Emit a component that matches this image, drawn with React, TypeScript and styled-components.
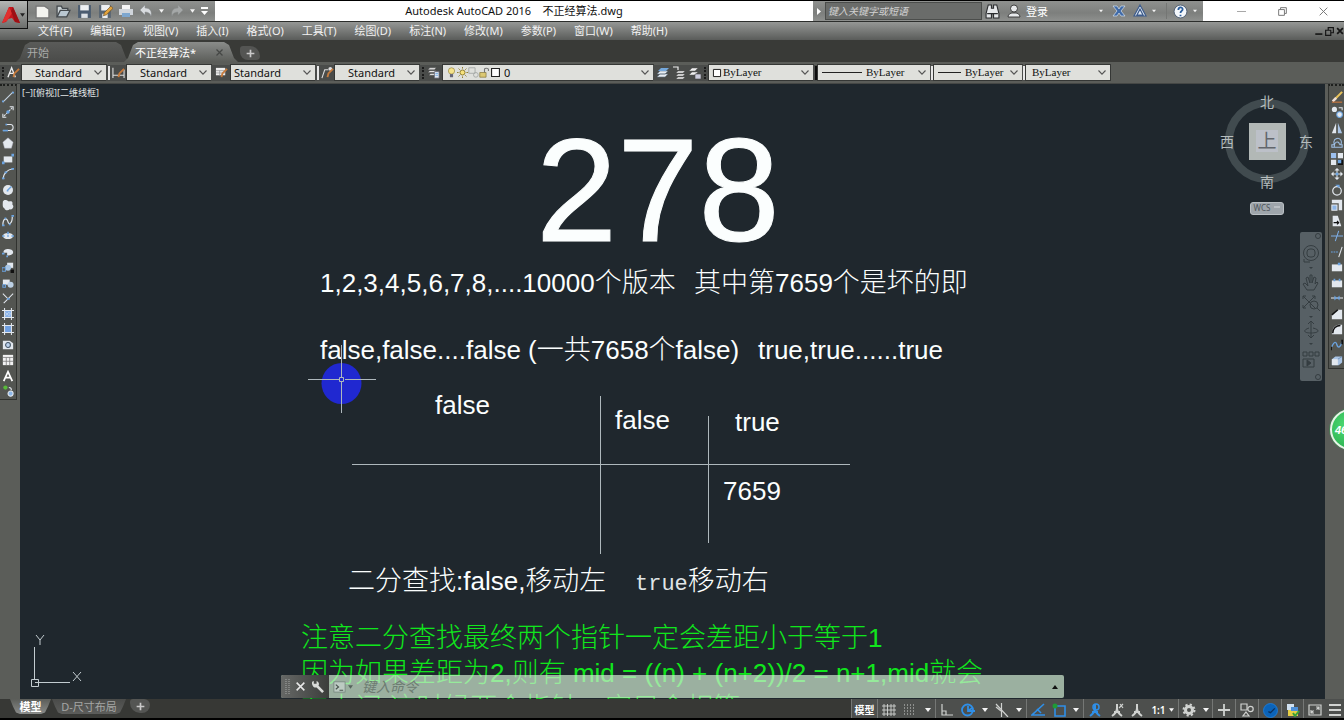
import React from "react";
import styled, { createGlobalStyle, css } from "styled-components";

const UI = `"Noto Sans", "Noto Sans CJK SC", sans-serif`;
const DRAW = `"Liberation Sans", "Noto Sans CJK SC", sans-serif`;

const Global = createGlobalStyle`
  * { box-sizing: border-box; }
  html, body { margin: 0; height: 100%; background: #000; }
  body { font-family: ${UI}; font-size: 11px; overflow: hidden; }
  button { border: 0; padding: 0; margin: 0; background: none; color: inherit; font: inherit; cursor: pointer; }
  svg { display: block; flex: none; }
`;

const Shell = styled.div`
  display: grid;
  grid-template-rows: auto auto auto auto minmax(0, 1fr) auto;
  height: 100vh;
  padding: 1px 0 2px;
  background: #000;
  overflow: hidden;
  position: relative;
`;

/* ---------- title bar ---------- */
const TitleBar = styled.header`
  display: flex;
  height: 20px;
  background: #fff;
`;
const LogoButton = styled.button`
  position: absolute;
  left: 0;
  top: 1px;
  width: 28px;
  height: 28px;
  z-index: 2;
  display: flex;
  align-items: center;
  padding-left: 2px;
  background: linear-gradient(#b4b6b4, #6c6e6c);
  border-right: 1px solid #111;
  border-bottom: 1px solid #111;
`;
const QuickAccess = styled.div`
  display: flex;
  align-items: center;
  gap: 6px;
  width: 215px;
  padding-left: 35px;
  background: linear-gradient(#8f918f, #7d7f7d 60%, #8e908e);
`;
const Title = styled.h1`
  flex: 1;
  margin: 0;
  text-align: center;
  font-size: 11px;
  font-weight: 400;
  line-height: 20px;
  color: #111;
  white-space: pre;
`;
const InfoCenter = styled.div`
  display: flex;
  align-items: center;
  width: 390px;
  background: linear-gradient(#8f918f, #7d7f7d 60%, #8e908e);
  color: #fff;
`;
const SearchToggle = styled.button`
  width: 12px;
  height: 20px;
  display: flex;
  align-items: center;
  justify-content: center;
`;
const SearchInput = styled.input`
  width: 157px;
  height: 18px;
  padding: 0 2px;
  border: 1px solid #4b4d4b;
  background: #6a6c6a;
  color: #eee;
  font: italic 10px ${UI};
  &::placeholder { color: #d2d2d2; opacity: 1; }
`;
const InfoButton = styled.button<{ $w: number }>`
  width: ${(p) => p.$w}px;
  height: 20px;
  display: flex;
  align-items: center;
  justify-content: center;
  gap: 5px;
`;
const Login = styled(InfoButton)`
  justify-content: flex-start;
  padding-left: 4px;
`;
const HelpButton = styled(InfoButton)`
  height: 16px;
  margin-left: auto;
  border-left: 1px solid #747674;
`;
const WindowButtons = styled.div`
  display: flex;
  width: 141px;
  padding-left: 18px;
  color: #777;
`;
const WindowButton = styled.button`
  flex: 1;
  display: flex;
  align-items: center;
  justify-content: center;
`;

/* ---------- menu ---------- */
const MenuBar = styled.nav`
  display: flex;
  align-items: center;
  gap: 18px;
  height: 19px;
  padding-left: 38px;
  border-top: 1px solid #2c2e2c;
  background: linear-gradient(#959795, #5a5c5a);
`;
const MenuItem = styled.button`
  text-align: left;
  color: #f2f2f2;
  line-height: 16px;
  white-space: nowrap;
`;
const ChildButtons = styled.div`
  display: flex;
  gap: 2px;
  margin-left: auto;
  color: #151515;
`;

/* ---------- file tabs ---------- */
const FileTabs = styled.div`
  display: flex;
  align-items: flex-end;
  height: 22px;
  padding-left: 16px;
  background: #393a37;
`;
const FileTab = styled.button<{ $active?: boolean }>`
  position: relative;
  display: flex;
  align-items: center;
  justify-content: space-between;
  width: 114px;
  height: 20px;
  margin-right: -6px;
  padding: 0 15px 0 11px;
  border-radius: 8px 8px 0 0;
  color: ${(p) => (p.$active ? "#fff" : "#a9aaa8")};
  background: ${(p) => (p.$active ? "linear-gradient(#8a8c8a, #5b5d59)" : "linear-gradient(#5a5b59, #4a4b49)")};
  clip-path: polygon(0 100%, 4px 80%, 9px 15%, 14px 0, calc(100% - 14px) 0, calc(100% - 9px) 15%, calc(100% - 4px) 80%, 100% 100%);
  z-index: ${(p) => (p.$active ? 1 : 0)};
`;
const AddTab = styled.button<{ $flip?: boolean }>`
  display: flex;
  align-items: center;
  justify-content: center;
  width: 20px;
  height: 14px;
  margin: 0 0 2px ${(p) => (p.$flip ? 3 : 8)}px;
  color: #c9c9c9;
  background: #545553;
  border-radius: ${(p) => (p.$flip ? "3px 6px 8px 10px" : "3px 10px 4px 8px")};
`;

/* ---------- property toolbar ---------- */
const ToolRow = styled.div`
  display: flex;
  align-items: center;
  height: 22px;
  border-bottom: 1px solid #454745;
  background: #5b5d59;
`;
const ToolSlot = styled.div<{ $w: number }>`
  display: flex;
  align-items: center;
  justify-content: center;
  gap: 2px;
  width: ${(p) => p.$w}px;
  height: 16px;
  background: #4a4c4a;
`;
const ToolGap = styled.i`
  width: 3px;
`;
const Divider = styled.i<{ $dark?: boolean }>`
  width: 2px;
  height: 14px;
  background: ${(p) => (p.$dark ? "#0c0c0c" : "#e8e8e8")};
`;
const Grip = styled.i`
  width: 3px;
  height: 12px;
  border-left: 2px dotted #1b1b1b;
`;
const Combo = styled.label<{ $w: number }>`
  display: flex;
  align-items: center;
  width: ${(p) => p.$w}px;
  height: 15px;
  padding-right: 4px;
  background: #dfe0dc;
  color: #555;
  outline: 1px solid #353735;
`;
const Select = styled.select<{ $indent?: number; $serif?: boolean }>`
  flex: 1;
  min-width: 0;
  height: 15px;
  appearance: none;
  border: 0;
  padding: 0 0 0 ${(p) => p.$indent ?? 2}px;
  background: transparent;
  color: #111;
  font: 11px ${(p) => (p.$serif ? `"Liberation Serif", serif` : UI)};
  line-height: 15px;
`;
const LineSample = styled.i<{ $w: number }>`
  width: ${(p) => p.$w}px;
  height: 1px;
  margin-left: 4px;
  background: #222;
`;

/* ---------- work area ---------- */
const Work = styled.main`
  display: flex;
  min-height: 0;
  background: #5b5d59;
`;
const Palette = styled.div<{ $count: number; $side: "left" | "right" }>`
  display: flex;
  flex-direction: column;
  align-items: center;
  height: ${(p) => p.$count * 15 + p.$count / 2 + 6}px;
  flex: none;
  padding-top: 3px;
  background: #535551;
  border: solid #30322f;
  border-width: 0 1px 1px;
  border-top: 2px dotted #1d1f1d;
  ${(p) =>
    p.$side === "left"
      ? css`width: 17px; margin-right: 3px; border-left: 0;`
      : css`width: 16px; margin-left: 3px; border-right: 0;`}
`;
const PaletteButton = styled.button`
  flex: 1;
  width: 15px;
  display: flex;
  align-items: center;
  justify-content: center;
`;
const Canvas = styled.section`
  position: relative;
  flex: 1;
  min-width: 0;
  overflow: hidden;
  background: #1f272d;
`;
const ViewLabel = styled.button`
  position: absolute;
  left: 2px;
  top: 2px;
  font-size: 9px;
  line-height: 14px;
  color: #e2e6e6;
`;
const Note = styled.div<{ $x: number; $y: number; $green?: boolean }>`
  position: absolute;
  left: ${(p) => p.$x}px;
  top: ${(p) => p.$y}px;
  font-family: ${DRAW};
  font-size: 26px;
  line-height: 32px;
  white-space: pre;
  color: ${(p) => (p.$green ? "#10e61c" : "#fbfefe")};
`;
const Headline = styled(Note)`
  font-size: 146px;
  line-height: 146px;
  -webkit-text-stroke: 1px #fbfefe;
`;
const Han = styled.span`
  font-family: "Noto Sans CJK SC", sans-serif;
  font-size: 27px;
  line-height: 0;
  font-weight: 300;
`;
const Mono = styled.span`
  font-family: "Liberation Mono", monospace;
  font-size: 22px;
  line-height: 0;
  color: #dfe4e6;
`;
const Geometry = styled.svg`
  position: absolute;
  left: 0;
  top: 0;
`;
const ViewCube = styled.svg`
  position: absolute;
  right: 9px;
  top: 8px;
`;
const Ucs = styled.svg`
  position: absolute;
  left: 8px;
  bottom: 6px;
`;
const NavBar = styled.div`
  position: absolute;
  right: 3px;
  top: 148px;
  width: 22px;
  height: 149px;
  border-radius: 2px;
  background: #576065;
  color: #353d41;
`;
const CommandBar = styled.form`
  position: absolute;
  left: 20%;
  right: 20%;
  bottom: 1px;
  height: 23px;
  display: flex;
  border-radius: 2px;
  overflow: hidden;
  background: rgba(208, 235, 210, 0.7);
`;
const CommandHandle = styled.div`
  display: flex;
  align-items: center;
  gap: 6px;
  width: 48px;
  padding-left: 4px;
  color: #e8e8e8;
  background: linear-gradient(90deg, #666866, #3b3d3b);
`;
const CommandPrompt = styled.span`
  display: flex;
  align-items: center;
  gap: 2px;
  width: 31px;
  padding-left: 4px;
  color: #56635c;
`;
const CommandInput = styled.input`
  flex: 1;
  min-width: 0;
  border: 0;
  padding: 0 2px;
  background: transparent;
  font: italic 14px ${UI};
  color: #26302a;
  &::placeholder { color: #6d7d72; opacity: 1; }
`;
const HistoryButton = styled.button`
  width: 18px;
  display: flex;
  align-items: center;
  justify-content: center;
`;
const Bubble = styled.button`
  position: absolute;
  right: -27px;
  top: 409px;
  width: 41px;
  height: 41px;
  border: 2px solid #e7f5e8;
  border-radius: 50%;
  background: radial-gradient(circle at 40% 40%, #4fdb74, #22a647);
  box-shadow: 0 0 0 1px #4b7a55;
  color: #fff;
  font: italic bold 11px "Liberation Sans", sans-serif;
  text-align: left;
  padding-left: 3px;
`;

/* ---------- bottom bar ---------- */
const BottomBar = styled.footer`
  display: flex;
  align-items: flex-start;
  height: 19px;
  padding-left: 10px;
  background: #373835;
`;
const LayoutTab = styled.button<{ $active?: boolean; $w: number }>`
  width: ${(p) => p.$w}px;
  height: 15px;
  margin-right: 1px;
  line-height: 15px;
  color: ${(p) => (p.$active ? "#fff" : "#a5a6a4")};
  font-weight: ${(p) => (p.$active ? 700 : 400)};
  background: ${(p) => (p.$active ? "linear-gradient(#5b5d59, #8a8c8a)" : "linear-gradient(#4a4b49, #5c5d5b)")};
  clip-path: polygon(0 0, 100% 0, calc(100% - 3px) 50%, calc(100% - 6px) 90%, calc(100% - 10px) 100%, 10px 100%, 6px 90%, 3px 50%);
`;
const StatusBar = styled.div`
  display: flex;
  margin-left: auto;
  background: #4d4f4d;
  color: #d0d2d0;
`;
const StatusButton = styled.button<{ $w: number; $sep?: boolean; $on?: boolean }>`
  width: ${(p) => p.$w}px;
  height: 19px;
  display: flex;
  align-items: center;
  justify-content: center;
  gap: 3px;
  padding-top: 3px;
  color: ${(p) => (p.$on ? "#2f8fe8" : "inherit")};
  border-left: 1px solid ${(p) => (p.$sep ? "#757775" : "transparent")};
  white-space: nowrap;
`;
const StatusText = styled.span`
  color: #fff;
  font-size: 10px;
  line-height: 14px;
  font-weight: 600;
`;

/* ---------- icons ---------- */
type IconProps = { s?: number; sw?: number; children: React.ReactNode };
const Icon = ({ s = 14, sw = 1.2, children }: IconProps) => (
  <svg width={s} height={s} viewBox="0 0 14 14" fill="none" stroke="currentColor" strokeWidth={sw} aria-hidden="true">
    {children}
  </svg>
);
const Caret = ({ w = 6, color = "#f4f4f4" }: { w?: number; color?: string }) => (
  <svg width={w} height={4} viewBox="0 0 6 4" aria-hidden="true">
    <path d="M0 0h6L3 4z" fill={color} />
  </svg>
);
const Chevron = () => (
  <svg width="8" height="5" viewBox="0 0 8 5" fill="none" stroke="#555" strokeWidth="1.1" aria-hidden="true">
    <path d="M.5 .5 4 4.2 7.5 .5" />
  </svg>
);
const Plus = () => (
  <Icon s={9} sw={2.6}>
    <path d="M7 1v12M1 7h12" />
  </Icon>
);

const B = "#6ba3e0";
const W = "#e3e8ee";

const newIcon = <path d="M1 2h8l4 3v8H1z" fill="#f3f3ef" stroke="#777" />;
const openIcon = <g stroke="#43484c"><path d="M1 12V2h4l1 2h5v2" fill="#cdd5d8" /><path d="M1 12 4 6h9l-3 6z" fill="#b9c7d1" /></g>;
const saveIcon = <g stroke="none"><path d="M1 1h12v12H1z" fill="#4b5c70" /><path d="M3 1h8v5H3z" fill="#eef0f2" /><path d="M4 9h6v4H4z" fill="#dde1e6" /></g>;
const saveAsIcon = <g stroke="none"><path d="M1 1h11v12H1z" fill="#586573" /><path d="M3 1h8v5H3zM4 9h5v4H4z" fill="#eef0f2" /><path d="m5 11 1-3 6-6 2 2-6 6z" fill="#e2a33d" stroke="#6b4b1d" strokeWidth=".6" /></g>;
const printIcon = <g stroke="none"><path d="M3 1h8v4H3z" fill="#f6f6f6" /><path d="M0 5h14v6H0z" fill="#d0d5db" /><path d="M3 9h8v4H3z" fill="#7ea7cf" /></g>;
const undoIcon = <path d="M1 6 6 1v3c5 0 7 3 6 8-1-3-3-4-6-4v3z" fill="#d9dcdf" stroke="#8b8f92" strokeWidth=".5" />;
const redoIcon = <path d="M13 6 8 1v3C3 4 1 7 2 12c1-3 3-4 6-4v3z" fill="#a5a8a8" stroke="#8b8f8f" strokeWidth=".5" />;
const brush = <path d="m7 12 1-4 5-5" stroke="#c67a3c" strokeWidth="2" />;

const textStyleIcon = <><path d="M1 12 5 2l4 10M2.5 8h5" stroke="#eee" strokeWidth="1.4" />{brush}</>;
const dimStyleIcon = <><path d="M1 2v11M13 4v9M1 10h12" stroke="#ddd" />{brush}</>;
const tableStyleIcon = <><path d="M1 2h10v8H1z" fill="#eee" stroke="none" /><path d="M1 5h10M1 7.5h10M5 5v5" stroke="#888" strokeWidth=".7" />{brush}</>;
const leaderStyleIcon = <><path d="M1 13 4 4h4" stroke="#ddd" /><circle cx="10" cy="3" r="2" fill="#ddd" stroke="none" />{brush}</>;
const layersIcon = <><path d="m1 4 2-2h7L8 4zM1 7l2-2h7L8 7zM2 10l2-2h6l-2 2z" fill="#f0f0f0" stroke="#444" strokeWidth=".5" /><path d="M8 6h5v7H8z" fill="#dfe8f2" stroke="#667" strokeWidth=".8" /><path d="M9 8h3M9 10h3" stroke={B} strokeWidth=".9" /></>;
const layerAIcon = <><path d="m1 11 3-3h8l-3 3zM1 8l3-3h8L9 8z" fill="#e9eef3" stroke="#60707f" strokeWidth=".6" /><path d="m2 5 3-3h8l-3 3z" fill="#75a8dc" stroke="none" /></>;
const layerBIcon = <><path d="m4 7 2-2h7l-2 2zM4 10l2-2h7l-2 2zM4 13l2-2h7l-2 2z" fill="#f0f0f0" stroke="#555" strokeWidth=".5" /><path d="M1 1h5v3" stroke="#eee" /></>;
const layerCIcon = <><path d="m1 5 3-3h6L7 5zM1 9l3-3h6L7 9z" fill="#f0f0f0" stroke="#555" strokeWidth=".5" /><path d="M7 8h6v5H7z" fill="#ccd" stroke="#444" strokeWidth=".6" /></>;
const bulbIcon = <><circle cx="7" cy="5" r="4" fill="#f4e28a" stroke="#8d7c3a" strokeWidth=".8" /><path d="M5 9h4v4H5z" fill="#667" stroke="none" /></>;
const sunIcon = <><circle cx="7" cy="7" r="3.2" fill="#f7e27c" stroke="#8c7a2e" /><path d="M7 0v2M7 12v2M0 7h2M12 7h2M2 2l1.5 1.5M10.5 10.5 12 12M2 12l1.5-1.5M10.5 3.5 12 2" stroke="#8c7a2e" /></>;
const vpIcon = <><path d="M1 1h8v7H1z" stroke="#a7aaa8" /><circle cx="10" cy="10" r="3" stroke="#a7aaa8" /></>;
const lockIcon = <><path d="M1 7h8v6H1z" fill="#dcc873" stroke="#7c6b2b" strokeWidth=".8" /><path d="M7 7V3c0-2 5-2 5 0v2" stroke="#777" strokeWidth="1.4" /></>;
const squareIcon = <path d="M2 2h10v10H2z" fill="#fff" stroke="#222" strokeWidth="1.4" />;

const drawTools: [string, React.ReactNode][] = [
  ["直线", <><path d="M1 13 13 1" stroke="#c9d6e4" /><path d="M0 12h2M12 2h2" stroke={B} strokeWidth="2" /></>],
  ["构造线", <><path d="M2 12 12 2" stroke={W} strokeDasharray="3 1" /><path d="M9 1h4v4M1 9v4h4" stroke={W} /><circle cx="7" cy="7" r="2" fill={B} stroke="none" /></>],
  ["多段线", <><path d="M5 3h5c4 0 4 7 0 7H1" stroke={W} /><path d="M1 10h6" stroke={B} strokeWidth="2" /><path d="M4 3h2" stroke={B} strokeWidth="2" /></>],
  ["多边形", <path d="m7 1 6 5-2 7H3L1 6z" fill={W} stroke="#aab" strokeWidth=".5" />],
  ["矩形", <><path d="M2 4h10v7H2z" fill={W} stroke="none" /><path d="M11 1h3v3h-3zM0 10h3v3H0z" fill={B} stroke="none" /></>],
  ["圆弧", <><path d="M1 13C2 6 6 2 13 1" stroke={W} /><path d="M0 12h3M3 5h3M11 1h3" stroke={B} strokeWidth="2" /></>],
  ["圆", <><circle cx="7" cy="7" r="5.8" fill={W} stroke="none" /><path d="m6 8 5-5M5.5 8h2" stroke={B} strokeWidth="1.6" /></>],
  ["修订云线", <path d="M1 3c1-3 5-2 7 0 3-1 5 0 4 3 3 3 0 7-3 6-2 2-6 1-6-1-3-1-2-5-2-8z" fill={W} stroke="none" />],
  ["样条曲线", <><path d="M1 12c0-9 5-9 6-4 1 4 5 2 5-6" stroke={W} strokeWidth="1.4" /><path d="M0 12h3M3 4h2M8 11h2M11 1h3" stroke={B} strokeWidth="2" /></>],
  ["椭圆", <><ellipse cx="7" cy="7" rx="6" ry="3.6" fill={W} stroke="none" /><path d="M0 7h3M11 7h3M7 2v3M6 7h2" stroke={B} strokeWidth="2" /></>],
  ["椭圆弧", <><path d="M2 8c-2-6 11-6 11-1 0 4-5 4-7 4V8z" fill={W} stroke="none" /><path d="M0 9h3M5 12h2" stroke={B} strokeWidth="2" /></>],
  ["插入块", <><path d="M6 2h7v6H6z" fill={W} stroke="none" /><circle cx="7" cy="8" r="3.5" fill="#a9c6e4" stroke="none" /><path d="M0 8h4v4H0z" stroke={B} /><path d="M10 10h4v4h-4z" fill="#111" stroke="none" /></>],
  ["创建块", <><path d="M1 3h8v6H1z" fill={W} stroke="none" /><circle cx="10" cy="9" r="3.5" fill="#bcd0e4" stroke="none" /><path d="M1 9h3v3H1z" stroke={B} /></>],
  ["点", <><path d="m1 2 6 6 6-6M7 8l-5 5" stroke={W} /><path d="M6 8h3" stroke={B} strokeWidth="2" /></>],
  ["图案填充", <><path d="M3 3h8v8H3z" fill="#86b1e8" stroke="none" /><path d="M3 0v14M11 0v14M0 3h14M0 11h14" stroke={W} /><path d="m4 5 2 2 2-2 2 2M4 9l2-2 2 2 2-2" stroke={W} strokeWidth=".7" /></>],
  ["渐变色", <><path d="M3 3h8v8H3z" fill="#6f9fe0" stroke="none" /><path d="M3 0v14M11 0v14M0 3h14M0 11h14" stroke={W} /></>],
  ["面域", <><path d="M1 2h8l4 3v7H1z" fill={W} stroke="none" /><circle cx="7" cy="7" r="2.8" fill="#bdd3ee" stroke="#456" /></>],
  ["表格", <><path d="M1 1h12v12H1z" fill="#f2f2f2" stroke="none" /><path d="M1 4h12M1 8.5h12M5 4v9M9 4v9" stroke="#777" strokeWidth=".9" /></>],
  ["多行文字", <path d="M2 13 7 2l5 11M4 9h6" stroke="#fff" strokeWidth="2" />],
  ["添加选定对象", <><circle cx="4" cy="3" r="2.5" fill="#58b83a" stroke="none" /><circle cx="10" cy="10" r="3" fill="#8db8ea" stroke={W} /><path d="M8 3c3 0 3 2 3 3" stroke={W} /></>],
];

const modifyTools: [string, React.ReactNode][] = [
  ["删除", <><path d="m5 9 8-8" stroke="#e9c35a" strokeWidth="2.4" /><path d="m2 12 4-4" stroke="#f0e0d8" strokeWidth="3" /><path d="M1 13h12" stroke="#d87b3a" /></>],
  ["复制", <><circle cx="4" cy="4" r="3" fill={W} stroke="none" /><circle cx="10" cy="10" r="3.3" fill={W} stroke={B} /><path d="M9 2h4v3" stroke={W} /></>],
  ["镜像", <><path d="M6 1v12H1z" fill={W} stroke="none" /><path d="M8 1v12h5z" fill="#a9c3e3" stroke="none" /></>],
  ["偏移", <path d="M1 12h12V9h-2c3-4-1-9-5-7-3 1-3 5-2 7H1zM4 12c-1-6 5-9 6-3" stroke="#9fc0e6" />],
  ["阵列", <><path d="M0 0h6v6H0z" fill="#9cc0ee" stroke="none" /><path d="M8 0h6v6H8zM0 8h6v6H0z" fill={W} stroke="none" /><path d="M8 8h6v6H8z" fill="#111" stroke="none" /><path d="M8 8h4v4H8z" fill={B} stroke="none" /></>],
  ["移动", <><path d="M7 2v10M2 7h10" stroke={W} /><path d="m7 0 3 3H4zM7 14l3-3H4zM0 7l3-3v6zM14 7l-3-3v6z" fill={W} stroke="none" /><path d="M5.5 5.5h3v3h-3z" fill={B} stroke="none" /></>],
  ["旋转", <><circle cx="7" cy="8" r="5" stroke={W} strokeWidth="1.4" /><path d="M5 1h5v4z" fill={B} stroke="none" /></>],
  ["缩放", <><path d="M1 1h12v12H9V5H1z" fill={W} stroke="none" /><path d="M1 7h6v6H1z" fill="#8db5e6" stroke={W} /></>],
  ["拉伸", <><path d="M2 1h6l4 12H2z" fill={W} stroke="none" /><path d="M3 9h6M7 7l2 2-2 2" stroke="#111" strokeWidth="1.4" /></>],
  ["修剪", <path d="M0 7h14M5 13 9 1" stroke="#7eaee6" />],
  ["延伸", <><path d="M0 7h8" stroke={B} strokeDasharray="2 1" /><path d="m9 13 4-12" stroke={W} /></>],
  ["打断于点", <><path d="M1 4h12v8H1z" fill={W} stroke="none" /><path d="M8 2h3v3H8z" fill={B} stroke="none" /></>],
  ["打断", <><path d="M1 4h12v8H1z" fill={W} stroke="none" /><path d="M3 2h2v3H3zM9 2h2v3H9z" fill={B} stroke="none" /></>],
  ["合并", <><path d="M0 7h14" stroke={W} /><path d="m4 4 3 3-3 3zM10 4 7 7l3 3z" fill={B} stroke="none" /></>],
  ["倒角", <><path d="M1 13V8l7-6h5v11z" fill={W} stroke="none" /><path d="m1 8 7-6" stroke="#111" strokeWidth="1.8" /></>],
  ["圆角", <><path d="M1 13c0-7 4-11 8-11h4v11z" fill={W} stroke="none" /><path d="M2 12C2 6 6 3 11 3" stroke="#111" strokeWidth="1.8" /></>],
  ["光顺曲线", <><path d="M1 9c3-7 5-6 6-2s4 3 6-4" stroke={B} strokeWidth="1.6" /><path d="M0 9v4M13 1v5" stroke="#111" strokeWidth="2" /></>],
  ["分解", <><path d="m1 6 4-3h8v7l-4 3H1z" fill="#a9c3e3" stroke="none" /><path d="M1 6h7v7H1z" fill={W} stroke="none" /><path d="m8 6 5-3" stroke="#5d7fa6" strokeWidth=".8" /></>],
];

const hanPattern = /([\u4e00-\u9fff]+)/;
const mixed = (text: string) =>
  text.split(hanPattern).map((part, i) => (hanPattern.test(part) ? <Han key={i}>{part}</Han> : part));

const menus = ["文件(F)", "编辑(E)", "视图(V)", "插入(I)", "格式(O)", "工具(T)", "绘图(D)", "标注(N)", "修改(M)", "参数(P)", "窗口(W)", "帮助(H)"];

type StyleComboProps = { label: string; w: number; indent?: number; serif?: boolean; value: string; lead?: React.ReactNode };
const StyleCombo = ({ label, w, indent, serif, value, lead }: StyleComboProps) => (
  <Combo $w={w}>
    {lead}
    <Select aria-label={label} $indent={indent} $serif={serif} defaultValue={value}>
      <option>{value}</option>
    </Select>
    <Chevron />
  </Combo>
);

const scaleFigure = <path d="M7 1v5M7 5c0 4-2 6-5 8M7 5c0 4 2 6 5 8M4 9h6" strokeWidth="2" />;

export default function App() {
  return (
    <Shell>
      <Global />
      <TitleBar>
        <LogoButton aria-label="应用程序菜单">
          <svg width="18" height="20" viewBox="0 0 18 20" aria-hidden="true">
            <path d="M0 18 7 2h4l7 16-5-1-3-4-4 1-2 3z" fill="#c4161c" />
            <path d="M7 2 0 18l5-2 5-8z" fill="#e0302f" />
            <path d="m9 6 4 11 5 1-7-16z" fill="#9d1015" />
          </svg>
          <Caret w={5} color="#222" />
        </LogoButton>
        <QuickAccess>
          <Icon s={15}>{newIcon}</Icon>
          <Icon s={15}>{openIcon}</Icon>
          <Icon s={15}>{saveIcon}</Icon>
          <Icon s={15}>{saveAsIcon}</Icon>
          <Icon s={14}>{printIcon}</Icon>
          <Icon>{undoIcon}</Icon>
          <Caret w={5} />
          <Icon>{redoIcon}</Icon>
          <Caret w={5} />
          <svg width="7" height="8" viewBox="0 0 7 8" aria-hidden="true"><path d="M0 0h7v2H0zM0 4h7L3.5 8z" fill="#fff" /></svg>
        </QuickAccess>
        <Title>{"Autodesk AutoCAD 2016    不正经算法.dwg"}</Title>
        <InfoCenter>
          <SearchToggle aria-label="展开搜索"><svg width="4" height="7" viewBox="0 0 4 7"><path d="M0 0v7l4-3.5z" fill="#fff" /></svg></SearchToggle>
          <SearchInput aria-label="搜索" placeholder="键入关键字或短语" />
          <InfoButton $w={21} aria-label="查找"><Icon s={15}><path d="M3 1h3v3h2V1h3l2 8v4H8V9H6v4H1V9z" fill="#e6e8ea" stroke="#2b2d2f" strokeWidth="1" /><path d="M2 9h4M8 9h4" stroke="#2b2d2f" /></Icon></InfoButton>
          <Login $w={91}><Icon><circle cx="7" cy="4.5" r="3.5" fill="#e8eaec" stroke="#333" strokeWidth=".9" /><path d="M1 13c0-3 3-4 4-4h4c1 0 4 1 4 4z" fill="#e8eaec" stroke="#333" strokeWidth=".9" /></Icon>登录</Login>
          <InfoButton $w={14} aria-label="登录选项"><Caret w={4} /></InfoButton>
          <InfoButton $w={22} aria-label="Exchange"><Icon><path d="M1 2h4l2 3 2-3h4l-4 5 4 5H9L7 9l-2 3H1l4-5z" fill="#3f6aa8" stroke="#d5e2f2" strokeWidth=".7" /></Icon></InfoButton>
          <InfoButton $w={28} aria-label="A360"><Icon><path d="M7 1 13 12H1zM7 5l3 6H4z" fill="#dfe8f3" stroke="#3e5c8c" /></Icon><Caret w={4} /></InfoButton>
          <HelpButton $w={37} aria-label="帮助"><Icon s={15}><circle cx="7" cy="7" r="6" fill="#f4f7fb" stroke="#44546a" strokeWidth=".8" /><path d="M5 5.5c0-3 4-3 4-.5C9 6.5 7 6.5 7 8.5M7 10v1.5" stroke="#2d5f9e" strokeWidth="1.7" /></Icon><Caret w={4} /></HelpButton>
        </InfoCenter>
        <WindowButtons>
          <WindowButton aria-label="最小化"><Icon s={9} sw={1}><path d="M0 7h14" /></Icon></WindowButton>
          <WindowButton aria-label="还原"><Icon s={9} sw={1.5}><path d="M1 4h9v9H1zM4 4V1h9v9h-3" /></Icon></WindowButton>
          <WindowButton aria-label="关闭"><Icon s={9} sw={1.5}><path d="m1 1 12 12M13 1 1 13" /></Icon></WindowButton>
        </WindowButtons>
      </TitleBar>

      <MenuBar>
        {menus.map((m) => <MenuItem key={m}>{m}</MenuItem>)}
        <ChildButtons>
          <button aria-label="最小化图形"><Icon s={9} sw={2.5}><path d="M2 11h11" /></Icon></button>
          <button aria-label="还原图形"><Icon s={9} sw={1.8}><path d="M1 5h8v8H1zM5 5V1h8v8H9" /></Icon></button>
          <button aria-label="关闭图形"><Icon s={8} sw={3}><path d="m2 2 10 10M12 2 2 12" /></Icon></button>
        </ChildButtons>
      </MenuBar>

      <FileTabs>
        <FileTab>开始</FileTab>
        <FileTab $active>不正经算法*<Icon s={7} sw={2.5}><path d="m1 1 12 12M13 1 1 13" stroke="#454745" /></Icon></FileTab>
        <AddTab aria-label="新图形"><Plus /></AddTab>
      </FileTabs>

      <ToolRow>
        <ToolSlot $w={22}><Grip /><Icon s={13}>{textStyleIcon}</Icon></ToolSlot>
        <StyleCombo label="文字样式" w={84} indent={13} value="Standard" />
        <ToolSlot $w={21}><Divider /><Icon s={13}>{dimStyleIcon}</Icon></ToolSlot>
        <StyleCombo label="标注样式" w={84} indent={13} value="Standard" />
        <ToolSlot $w={20}><Icon s={13}>{tableStyleIcon}</Icon></ToolSlot>
        <StyleCombo label="表格样式" w={84} indent={3} value="Standard" />
        <ToolSlot $w={20}><Divider /><Icon s={13}>{leaderStyleIcon}</Icon></ToolSlot>
        <StyleCombo label="多重引线样式" w={84} indent={13} value="Standard" />
        <ToolSlot $w={24}><Grip /><Icon s={13}>{layersIcon}</Icon></ToolSlot>
        <StyleCombo
          label="图层" w={210} indent={3} value="0"
          lead={<><ToolGap /><Icon s={11}>{bulbIcon}</Icon><Icon s={11}>{sunIcon}</Icon><Icon s={11}>{vpIcon}</Icon><Icon s={11}>{lockIcon}</Icon><Icon s={11}>{squareIcon}</Icon></>}
        />
        <ToolSlot $w={56}><Icon>{layerAIcon}</Icon><Icon>{layerBIcon}</Icon><Icon>{layerCIcon}</Icon><Grip /></ToolSlot>
        <StyleCombo label="颜色" w={104} indent={1} serif value="ByLayer" lead={<><ToolGap /><Icon s={10}>{squareIcon}</Icon></>} />
        <ToolSlot $w={5}><Divider $dark /></ToolSlot>
        <StyleCombo label="线型" w={112} indent={4} serif value="ByLayer" lead={<LineSample $w={40} />} />
        <ToolSlot $w={4}><Divider /></ToolSlot>
        <StyleCombo label="线宽" w={88} indent={4} serif value="ByLayer" lead={<LineSample $w={23} />} />
        <ToolSlot $w={4}><Divider /></ToolSlot>
        <StyleCombo label="打印样式" w={84} indent={6} serif value="ByLayer" />
      </ToolRow>

      <Work>
        <Palette $side="left" $count={20}>
          {drawTools.map(([name, art]) => <PaletteButton key={name} aria-label={name}><Icon s={12}>{art}</Icon></PaletteButton>)}
        </Palette>
        <Canvas>
          <ViewLabel>[−][俯视][二维线框]</ViewLabel>
          <Headline $x={516} $y={34}>278</Headline>
          <Note $x={300} $y={183}>{mixed("1,2,3,4,5,6,7,8,....10000个版本")}</Note>
          <Note $x={674} $y={183}>{mixed("其中第7659个是坏的即")}</Note>
          <Note $x={300} $y={250}>{mixed("false,false....false (一共7658个false)")}</Note>
          <Note $x={738} $y={250}>true,true......true</Note>

          <Geometry width="840" height="480" fill="none" stroke="#aeb8bc" aria-hidden="true">
            <ellipse cx="321.5" cy="299.5" rx="20" ry="20.5" fill="#2028d0" stroke="none" />
            <path d="M288 295.500h31M325 295.500h31M321.500 261v32M321.500 298v31M319.500 293.500h4v4h-4z" />
            <path d="M332 380.500h498M580.500 312v158M688.500 332v127" />
          </Geometry>

          <Note $x={415} $y={305}>false</Note>
          <Note $x={595} $y={320}>false</Note>
          <Note $x={715} $y={322}>true</Note>
          <Note $x={703} $y={391}>7659</Note>
          <Note $x={328} $y={481}>{mixed("二分查找:false,移动左")}</Note>
          <Note $x={615} $y={481}><Mono>true</Mono>{mixed("移动右")}</Note>
          <Note $x={281} $y={538} $green>{mixed("注意二分查找最终两个指针一定会差距小于等于1")}</Note>
          <Note $x={281} $y={573} $green>{mixed("因为如果差距为2,则有 mid = ((n) + (n+2))/2 = n+1,mid就会")}</Note>
          <Note $x={281} $y={608} $green>{mixed("在中间,这时候两个指针一定只会相等")}</Note>

          <ViewCube width="98" height="126" viewBox="0 0 98 126" fontFamily={UI} fontSize="14" fill="#b5bcbd" textAnchor="middle">
            <circle cx="49" cy="49" r="38" fill="none" stroke="#414b4f" strokeWidth="8" />
            <rect x="31" y="31" width="37" height="37" fill="#b2b8b6" />
            <rect x="38" y="38" width="22" height="22" fill="#bcc0c8" />
            <text x="49" y="56" fontSize="19" fill="#62666c">上</text>
            <text x="49" y="15">北</text>
            <text x="49" y="95">南</text>
            <text x="9" y="55">西</text>
            <text x="88" y="55">东</text>
            <rect x="32.5" y="110.5" width="33" height="12" rx="2.5" fill="#9ea5ab" stroke="#bac0c4" />
            <text x="44" y="119" fontSize="8" fill="#4e555c">WCS</text>
            <path d="M56 115h6" stroke="#d5d9dc" />
          </ViewCube>

          <NavBar>
            <svg width="22" height="149" viewBox="0 0 22 149" fill="none" stroke="currentColor" aria-hidden="true">
              <circle cx="18" cy="4" r="2.5" />
              <circle cx="11" cy="21" r="7.5" /><rect x="7" y="17" width="8" height="8" rx="3" /><path d="M4 27v3h6" />
              <path d="M9 35h4l-2 2zM9 84h4l-2 2zM9 111h4l-2 2z" fill="currentColor" stroke="none" />
              <path d="M7 58 3 52l2-1 3 3-2-8 2-1 2 6V43h2v8l2-6 2 1-1 6 2-2 1 1-4 7z" />
              <path d="m3 64 12 12M15 64 3 76M3 67v-3h3M15 67v-3h-3M3 73v3h3" /><circle cx="14" cy="73" r="4" /><path d="m17 76 3 3" />
              <path d="M11 89v17M8 92l3-3 3 3M8 103l3 3 3-3M13 96c8 2 6 5-2 5s-8-3-2-5" />
              <path d="M3 120h4v4H3zM9 120h4v4H9zM15 120h4v4h-4zM3 127h11v8H3z" /><path d="m7 128 4 3-4 3z" fill="currentColor" />
              <circle cx="18" cy="145" r="2.5" />
            </svg>
          </NavBar>

          <Ucs width="60" height="58" viewBox="0 0 60 58" fill="none" stroke="#c3ccd0" aria-hidden="true">
            <path d="M6.500 12v32M10 47.500h32M3.500 44.500h7v7h-7zM7 47.500h3M8 0l4 5 4-5M12 5v5M45 37l8 9M53 37l-8 9" />
          </Ucs>

          <CommandBar onSubmit={(e) => e.preventDefault()}>
            <CommandHandle>
              <svg width="5" height="16" viewBox="0 0 5 16" aria-hidden="true"><path d="M1 0v16M4 0v16" stroke="#a6a8a6" strokeDasharray="1 1" /></svg>
              <Icon s={9} sw={2.4}><path d="m1 1 12 12M13 1 1 13" /></Icon>
              <Icon s={13}><path d="M1 3c0-1 1-2 2-2v3h3V1c3 1 3 4 2 5l6 6-2 2-6-6C3 9 1 6 1 3z" fill="#d8dad8" stroke="none" /></Icon>
            </CommandHandle>
            <CommandPrompt>
              <Icon s={13}><rect x="1" y="2" width="12" height="11" fill="#bccbc2" stroke="#71807a" strokeWidth=".8" /><path d="m3 5 3 2.500L3 10M7 11h4" stroke="#48534d" /></Icon>
              <Caret w={5} color="#56635c" />
            </CommandPrompt>
            <CommandInput aria-label="命令" placeholder="键入命令" />
            <HistoryButton type="button" aria-label="最近的命令"><svg width="6" height="4" viewBox="0 0 6 4"><path d="M0 4h6L3 0z" fill="#111" /></svg></HistoryButton>
          </CommandBar>
        </Canvas>
        <Palette $side="right" $count={18}>
          {modifyTools.map(([name, art]) => <PaletteButton key={name} aria-label={name}><Icon s={12}>{art}</Icon></PaletteButton>)}
        </Palette>
      </Work>

      <Bubble aria-label="悬浮球">46</Bubble>

      <BottomBar>
        <LayoutTab $w={41} $active>模型</LayoutTab>
        <LayoutTab $w={74}>D-尺寸布局</LayoutTab>
        <AddTab $flip aria-label="新布局"><Plus /></AddTab>
        <StatusBar>
          <StatusButton $w={26} $sep><StatusText>模型</StatusText></StatusButton>
          <StatusButton $w={22} $sep aria-label="栅格"><Icon><path d="M2 1v12M5.500 1v12M9 1v12M12 1v12M0 3h14M0 7h14M0 11h14" strokeWidth=".9" /></Icon></StatusButton>
          <StatusButton $w={20} aria-label="捕捉"><Icon><path d="M1 2h12M1 5h12M1 8h12M1 11h12" strokeDasharray="1 2" /></Icon></StatusButton>
          <StatusButton $w={16} aria-label="捕捉选项"><Caret /></StatusButton>
          <StatusButton $w={22} $sep aria-label="正交"><Icon><path d="M2 1v11h11M2 8h4v4" /></Icon></StatusButton>
          <StatusButton $w={20} $on aria-label="极轴追踪"><Icon sw={1.8}><circle cx="6.5" cy="7" r="5.5" /><path d="M7 3v5h7M7 8l4-3" /></Icon></StatusButton>
          <StatusButton $w={14} aria-label="极轴选项"><Caret /></StatusButton>
          <StatusButton $w={20} aria-label="等轴测"><Icon><path d="M1 1 13 14M6.500 0v14" /><path d="m1 4 5 4" /></Icon></StatusButton>
          <StatusButton $w={15} aria-label="等轴测选项"><Caret /></StatusButton>
          <StatusButton $w={22} $sep $on aria-label="对象捕捉追踪"><Icon sw={1.6}><path d="M13 1 1 12h13" /><path d="M6 6l4 4" /></Icon></StatusButton>
          <StatusButton $w={20} $on aria-label="对象捕捉"><Icon sw={1.6}><path d="M3 3h10v10H3z" /><circle cx="3" cy="3" r="2.5" fill="#1f9b35" stroke="none" /></Icon></StatusButton>
          <StatusButton $w={15} aria-label="对象捕捉选项"><Caret /></StatusButton>
          <StatusButton $w={23} $sep $on aria-label="注释可见性"><Icon><circle cx="8" cy="4" r="3" strokeWidth="1.5" />{scaleFigure}</Icon></StatusButton>
          <StatusButton $w={20} aria-label="自动缩放"><Icon>{scaleFigure}<path d="m9 5 4-4M10 1l3 4" /></Icon></StatusButton>
          <StatusButton $w={20} aria-label="注释比例图标"><Icon>{scaleFigure}</Icon></StatusButton>
          <StatusButton $w={32}><StatusText>1:1</StatusText><Caret w={5} /></StatusButton>
          <StatusButton $w={20} $sep aria-label="切换工作空间"><Icon><circle cx="7" cy="7" r="3.5" strokeWidth="3" /><circle cx="7" cy="7" r="5.5" strokeWidth="2" strokeDasharray="2.2 2.12" /></Icon></StatusButton>
          <StatusButton $w={14} aria-label="工作空间选项"><Caret /></StatusButton>
          <StatusButton $w={23} $sep aria-label="注释监视器"><Icon sw={1.8}><path d="M7 1v12M1 7h12" /></Icon></StatusButton>
          <StatusButton $w={23} $sep aria-label="隔离对象"><Icon><path d="M1 1h6v6H1z" /><circle cx="10.5" cy="6" r="2.7" /><path d="m6 9 3 4H3z" /></Icon></StatusButton>
          <StatusButton $w={23} $sep aria-label="硬件加速"><Icon s={15}><circle cx="7" cy="7" r="6.5" fill="#0b63b8" stroke="#1c7fe0" strokeWidth=".8" /><path d="m5 8 2 1 4-4" stroke="#0b2f5c" /></Icon></StatusButton>
          <StatusButton $w={22} $sep aria-label="清理"><Icon><path d="M1 1h7v6H1z" fill="#cfe0f0" stroke="none" /><path d="M2 7h10v6H2z" fill="#e7cf45" stroke="none" /><path d="M5 4h7v4H5z" fill="#4d8fd6" stroke="none" /><path d="m7 10 2 3 4-5" stroke="#38a13a" strokeWidth="2" /></Icon></StatusButton>
          <StatusButton $w={22} $sep aria-label="全屏显示"><Icon><path d="M1 2h12v10H1z" /><path d="M8 4h3v3M6 10H3V7M11 4 8.500 6.500M3 10l2.500-2.500" /></Icon></StatusButton>
          <StatusButton $w={19} aria-label="自定义"><Icon sw={1.8}><path d="M1 2h12M1 7h12M1 12h12" /></Icon></StatusButton>
        </StatusBar>
      </BottomBar>
    </Shell>
  );
}
